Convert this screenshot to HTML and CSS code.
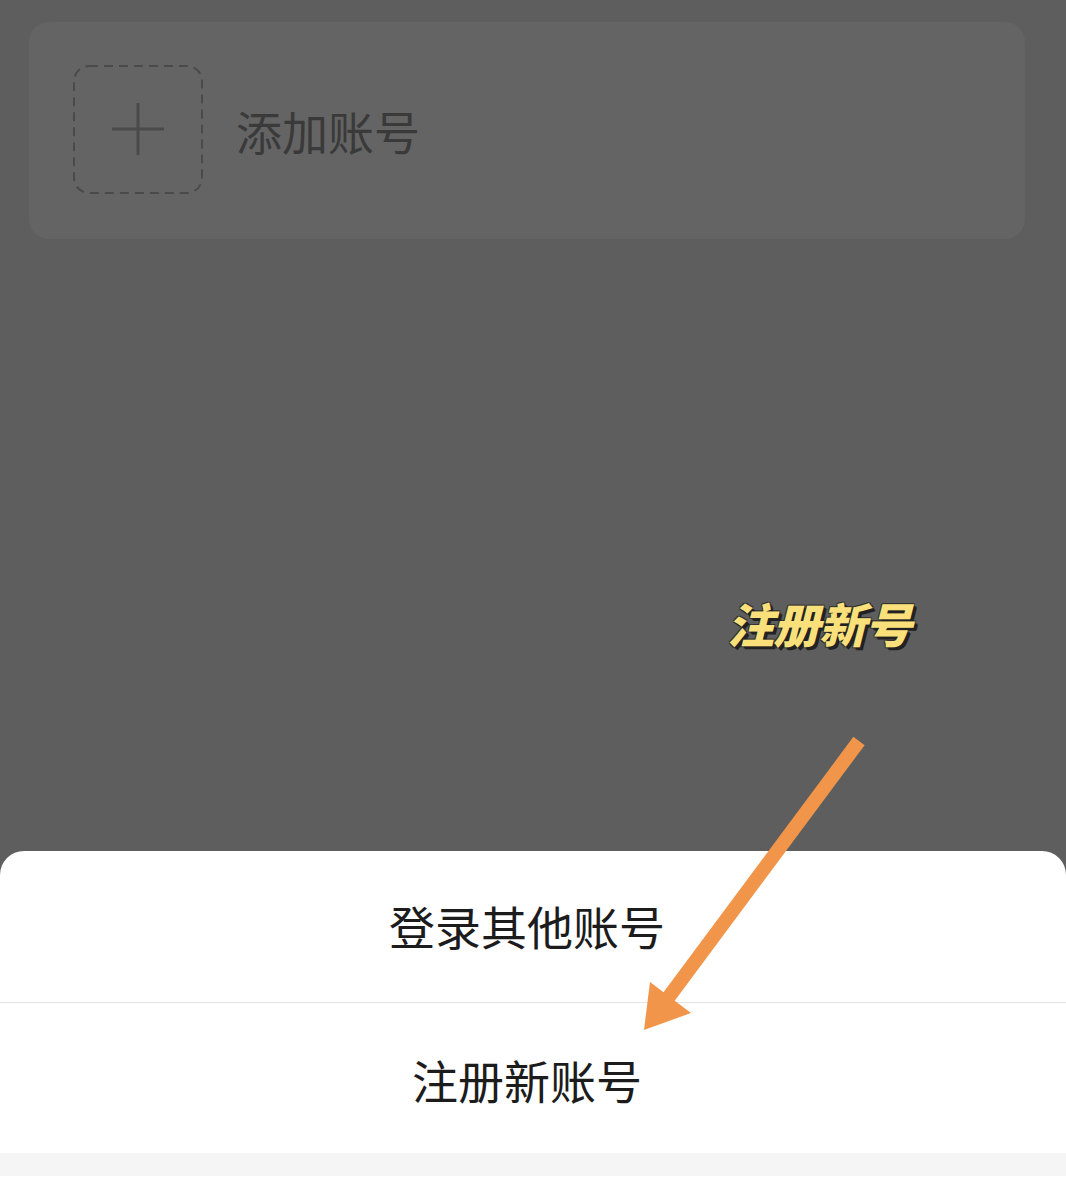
FILE: index.html
```html
<!DOCTYPE html>
<html lang="zh-CN">
<head>
<meta charset="utf-8">
<title>添加账号</title>
<link rel="stylesheet" href="styles.css">
</head>
<body>
<div class="page">
  <div class="card">
    <div class="add-box">
      <svg class="dash" viewBox="0 0 130 129" width="130" height="129">
        <rect x="1" y="1" width="128" height="127" rx="15" ry="15" fill="none" stroke="#4a4a4a" stroke-width="2" stroke-dasharray="9 6"/>
      </svg>
      <svg class="plus" viewBox="0 0 54 54" width="54" height="54">
        <path d="M1 27H53M27 1V53" stroke="#4a4a4a" stroke-width="3" fill="none"/>
      </svg>
    </div>
    <div class="add-text">添加账号</div>
  </div>
  <div class="spacer"></div>
  <div class="sheet">
    <div class="row">登录其他账号</div>
    <div class="row row-second">注册新账号</div>
    <div class="strip"></div>
    <div class="tail"></div>
  </div>
  <div class="label">注册新号</div>
  <svg class="arrow" viewBox="0 0 1066 1201" width="1066" height="1201">
    <line x1="859" y1="741" x2="668" y2="998" stroke="#f0954a" stroke-width="14"/>
    <polygon points="644,1030 650,982 691,1013" fill="#f0954a"/>
  </svg>
</div>
</body>
</html>
```
FILE: styles.css
```css
html, body {
  margin: 0;
  padding: 0;
}
body {
  background: #5e5e5e;
  font-family: "Noto Sans CJK SC", "Noto Sans", sans-serif;
}
.page {
  position: relative;
  width: 1066px;
  height: 1201px;
  overflow: hidden;
  display: flex;
  flex-direction: column;
}
.card {
  margin: 22px 41px 0 29px;
  height: 217px;
  background: #646464;
  border-radius: 20px;
  display: flex;
  align-items: center;
  padding-left: 44px;
  box-sizing: border-box;
}
.add-box {
  position: relative;
  width: 130px;
  height: 129px;
  display: flex;
  align-items: center;
  justify-content: center;
  margin-top: -3px;
}
.dash {
  position: absolute;
  left: 0;
  top: 0;
}
.add-text {
  margin-left: 33px;
  font-size: 46px;
  color: #3a3a3a;
  line-height: 1;
  margin-top: -2px;
}
.spacer {
  flex: 1;
}
.sheet {
  height: 350px;
  background: #ffffff;
  border-radius: 24px 24px 0 0;
  display: flex;
  flex-direction: column;
}
.row {
  height: 151px;
  display: flex;
  align-items: center;
  justify-content: center;
  font-size: 46px;
  color: #1c1c1c;
  padding-right: 12px;
  padding-bottom: 4px;
  box-sizing: border-box;
}
.row-second {
  height: 151px;
  border-top: 1px solid #e4e4e4;
  padding-top: 2px;
  padding-bottom: 0;
}
.strip {
  height: 23px;
  background: #f5f5f5;
}
.tail {
  flex: 1;
  background: #ffffff;
}
.label {
  position: absolute;
  left: 727px;
  top: 597px;
  font-size: 47px;
  font-weight: 900;
  font-style: italic;
  color: #f9e07a;
  line-height: 1.1;
  letter-spacing: -1px;
  text-shadow: 2px 2px 0 #222, 3px 3px 0 #222, -1px -1px 0 #333, 1px -1px 0 #333, -1px 1px 0 #333;
}
.arrow {
  position: absolute;
  left: 0;
  top: 0;
  pointer-events: none;
}
```
